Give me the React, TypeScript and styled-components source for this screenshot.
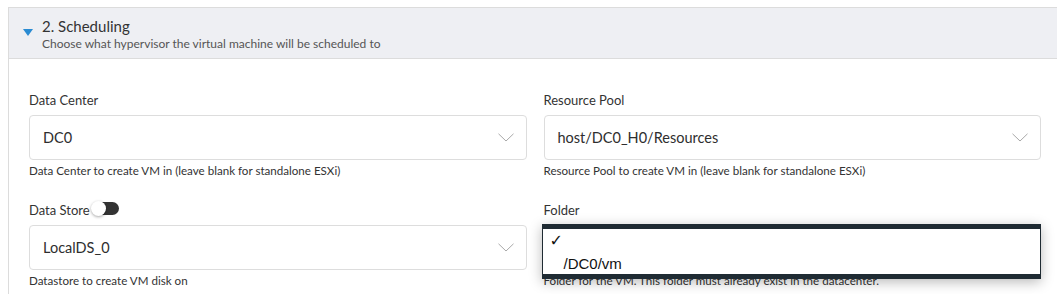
import React from "react";
import styled, { createGlobalStyle } from "styled-components";

const GlobalStyle = createGlobalStyle`
  html, body {
    margin: 0;
    padding: 0;
    background: #ffffff;
    overflow: hidden;
  }
  body {
    padding: 7px 0 0 8px;
    font-family: Lato, "Open Sans", sans-serif;
    color: #333333;
  }
`;

interface FieldProps {
  label: string;
  value: string;
  help: string;
  toggle?: boolean;
  menu?: string[];
}

const Chevron = () => (
  <svg width="16" height="9" viewBox="0 0 16 9" fill="none">
    <path d="M0.5 0.8 L8 8 L15.5 0.8" stroke="#a9a9a9" strokeWidth="1" />
  </svg>
);

const Field = ({ label, value, help, toggle, menu }: FieldProps) => (
  <FieldBox>
    <LabelRow>
      <Label>{label}</Label>
      {toggle && (
        <Toggle>
          <Knob />
        </Toggle>
      )}
    </LabelRow>
    <SelectBox>
      <Value $hidden={!!menu}>{value}</Value>
      <Chevron />
    </SelectBox>
    <Help>{help}</Help>
    {menu && (
      <Menu>
        <MenuItem>
          <Check>✓</Check>
        </MenuItem>
        {menu.map((item) => (
          <MenuItem key={item}>
            <MenuText>{item}</MenuText>
          </MenuItem>
        ))}
      </Menu>
    )}
  </FieldBox>
);

export default function App() {
  return (
    <>
      <GlobalStyle />
      <Panel>
        <Header>
          <Caret />
          <HeaderText>
            <Title>2. Scheduling</Title>
            <Subtitle>
              Choose what hypervisor the virtual machine will be scheduled to
            </Subtitle>
          </HeaderText>
        </Header>
        <FieldGrid>
          <Field
            label="Data Center"
            value="DC0"
            help="Data Center to create VM in (leave blank for standalone ESXi)"
          />
          <Field
            label="Resource Pool"
            value="host/DC0_H0/Resources"
            help="Resource Pool to create VM in (leave blank for standalone ESXi)"
          />
          <Field
            label="Data Store"
            value="LocalDS_0"
            help="Datastore to create VM disk on"
            toggle
          />
          <Field
            label="Folder"
            value="/DC0/vm"
            help="Folder for the VM. This folder must already exist in the datacenter."
            menu={["/DC0/vm"]}
          />
        </FieldGrid>
      </Panel>
    </>
  );
}

const Panel = styled.div`
  width: 1054px;
  box-sizing: border-box;
  border: 1px solid #dcdcdc;
  border-bottom: none;
  height: 300px;
`;

const Header = styled.div`
  display: flex;
  align-items: flex-start;
  gap: 9px;
  padding: 9px 14px 7px;
  background: #eeeff3;
  border-bottom: 1px solid #dcdcdc;
`;

const HeaderText = styled.div`
  display: flex;
  flex-direction: column;
  gap: 2px;
`;

const Caret = styled.div`
  width: 0;
  height: 0;
  margin-top: 12px;
  border-left: 5.5px solid transparent;
  border-right: 5.5px solid transparent;
  border-top: 7px solid #2a8bd2;
`;

const Title = styled.div`
  font-size: 15px;
  line-height: 18px;
  color: #333333;
`;

const Subtitle = styled.div`
  font-size: 12px;
  line-height: 14px;
  color: #555555;
`;

const FieldGrid = styled.div`
  display: grid;
  grid-template-columns: 1fr 1fr;
  column-gap: 17px;
  row-gap: 24px;
  padding: 33px 20px 0;
`;

const FieldBox = styled.div`
  position: relative;
  display: flex;
  flex-direction: column;
`;

const LabelRow = styled.div`
  display: flex;
  align-items: center;
  gap: 1px;
  min-height: 16px;
`;

const Label = styled.div`
  font-size: 13px;
  line-height: 16px;
  color: #333333;
`;

const Toggle = styled.div`
  position: relative;
  width: 27px;
  height: 13px;
  margin: 0 0 3px 1px;
  border-radius: 7px;
  background: #333333;
`;

const Knob = styled.div`
  position: absolute;
  left: -1px;
  top: -1px;
  width: 15px;
  height: 15px;
  border-radius: 50%;
  background: #ffffff;
  box-shadow: 0 1px 3px rgba(0, 0, 0, 0.35);
`;

const SelectBox = styled.div`
  display: flex;
  align-items: center;
  justify-content: space-between;
  height: 45px;
  box-sizing: border-box;
  margin-top: 7px;
  padding: 0 12px 0 13px;
  border: 1px solid #dddddd;
  border-radius: 4px;
  background: #ffffff;
`;

const Value = styled.div<{ $hidden?: boolean }>`
  font-size: 14.5px;
  line-height: 18px;
  color: #2e2e2e;
  visibility: ${({ $hidden }) => ($hidden ? "hidden" : "visible")};
`;

const Help = styled.div`
  margin-top: 4px;
  font-size: 11.6px;
  line-height: 14px;
  color: #333333;
`;

const Menu = styled.div`
  position: absolute;
  top: 22px;
  left: -2px;
  right: 0;
  box-sizing: border-box;
  height: 55px;
  padding-top: 1px;
  border: 1px solid #1f2b33;
  border-top-width: 5px;
  border-bottom-width: 5px;
  background: #ffffff;
  box-shadow: 0 3px 12px rgba(0, 0, 0, 0.28);
  font-family: "Liberation Sans", Arial, sans-serif;
  color: #111111;
`;

const MenuItem = styled.div`
  height: 21px;
  display: flex;
  align-items: center;
`;

const Check = styled.span`
  padding-left: 7px;
  font-family: "DejaVu Sans", sans-serif;
  font-size: 16px;
  font-weight: bold;
`;

const MenuText = styled.span`
  padding-left: 21px;
  padding-top: 3px;
  font-size: 15px;
`;
